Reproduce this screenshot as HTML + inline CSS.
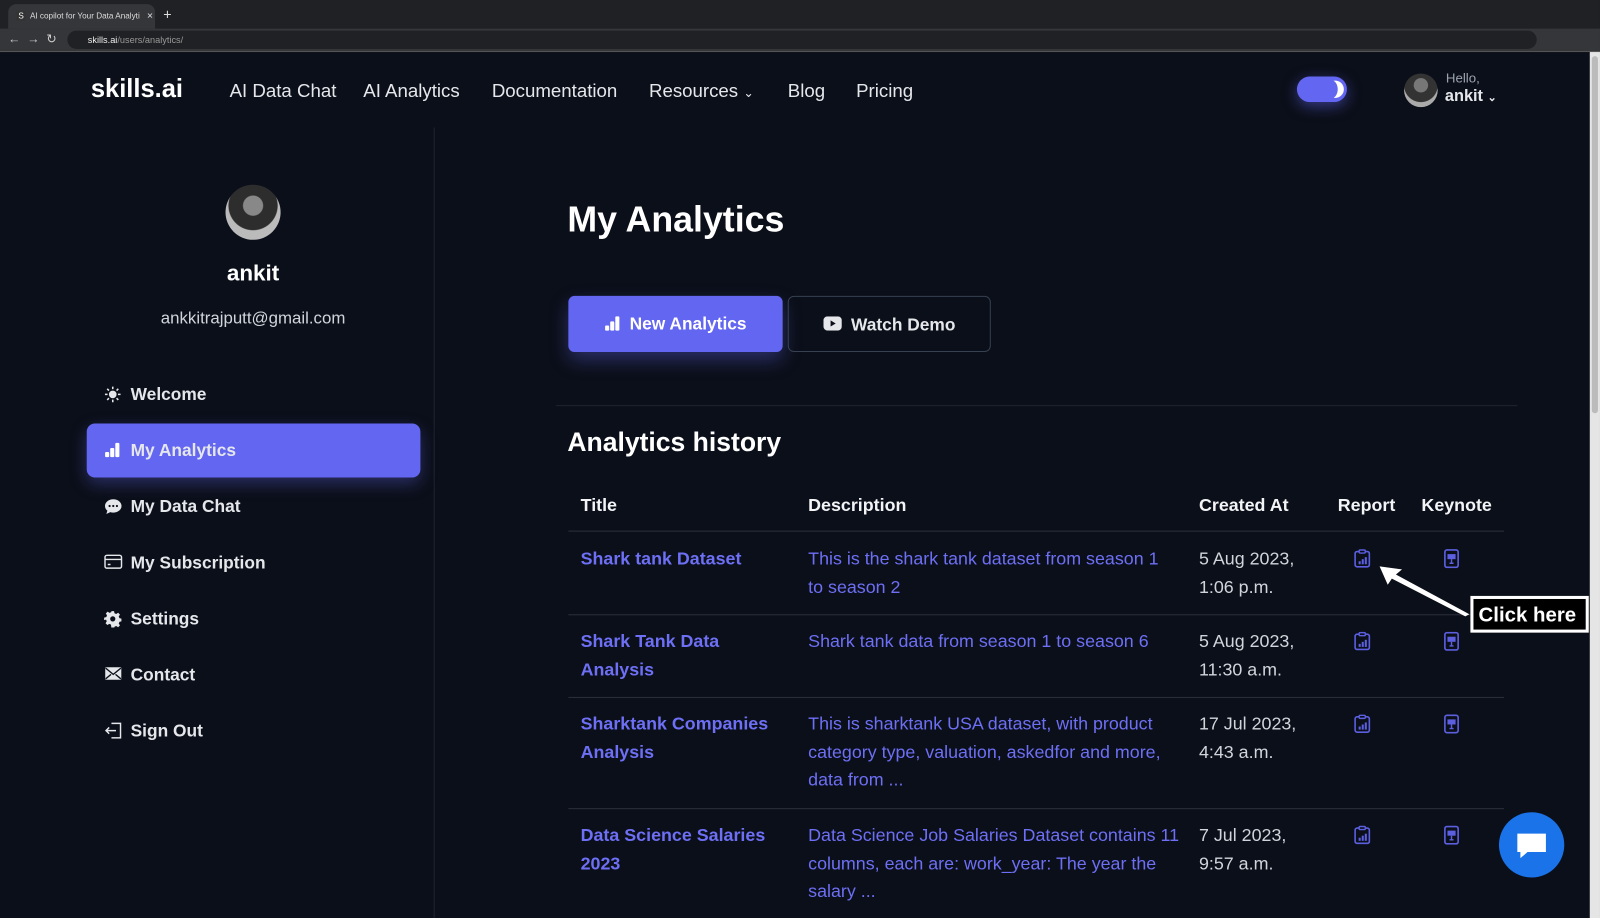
<!DOCTYPE html>
<html><head><meta charset="utf-8"><style>
*{box-sizing:border-box;margin:0;padding:0}
body{width:1600px;height:900px;overflow:hidden;background:#0b0f19;font-family:"Liberation Sans",sans-serif;color:#e5e7eb;position:relative}
#w{position:absolute;left:0;top:0;width:1568px;height:882px;transform:scale(1.0204);transform-origin:0 0}
.abs{position:absolute}
.tabbar{left:0;top:0;width:1568px;height:28px;background:#202124}
.tab{left:8px;top:4px;width:144px;height:24px;background:#35363a;border-radius:8px 8px 0 0;font-size:8px;color:#ddd;padding:7px 0 0 8px}
.toolbar{left:0;top:28px;width:1568px;height:23px;background:#35363a;border-bottom:1px solid #555}
.url{left:66px;top:30px;width:1440px;height:18px;background:#202124;border-radius:9px;font-size:9px;color:#999;padding:4px 0 0 20px}
.url b{color:#eee;font-weight:normal}
.nav{top:78px;font-size:18.3px;color:#e5e7eb}
.side a{position:absolute;left:85px;width:327px;height:53px;font-size:17px;color:#e5e7eb;font-weight:bold;padding:17px 0 0 43px}
.side svg{position:absolute;left:17px;top:18px}
.th{top:485px;font-size:17.5px;font-weight:bold;color:#f3f4f6}
.t{font-size:17.5px;line-height:27.5px;position:absolute}
.ti{color:#6d6ff5;font-weight:bold}
.de{color:#6d6ff5}
.ca{color:#d1d5db}
.hr{position:absolute;left:557px;width:917px;height:1px;background:#2a2f3a}
</style></head><body><div id="w">
<div class="abs tabbar"></div>
<div class="abs tab"><span style="background:#333;color:#fff;padding:0 2px;margin-right:4px">S</span>AI copilot for Your Data Analyti &nbsp;&nbsp;✕</div>
<div class="abs" style="left:160px;top:6px;color:#ddd;font-size:14px">+</div>
<div class="abs toolbar"></div>
<div class="abs" style="left:8px;top:31px;color:#ccc;font-size:12px">←&nbsp;&nbsp;→&nbsp;&nbsp;↻</div>
<div class="abs url"><b>skills.ai</b>/users/analytics/</div>
<div class="abs" style="left:1558px;top:51px;width:10px;height:849px;background:#e5e5e5"></div>
<div class="abs" style="left:1560px;top:55px;width:6px;height:350px;background:#bbb;border-radius:3px"></div>

<div class="abs" style="left:89px;top:73px;font-size:25px;font-weight:bold;color:#fff">skills.ai</div>
<div class="abs nav" style="left:225px">AI Data Chat</div>
<div class="abs nav" style="left:356px">AI Analytics</div>
<div class="abs nav" style="left:482px">Documentation</div>
<div class="abs nav" style="left:636px">Resources <span style="font-size:12px">&#8964;</span></div>
<div class="abs nav" style="left:772px">Blog</div>
<div class="abs nav" style="left:839px">Pricing</div>
<div class="abs" style="left:1271px;top:75px;width:49px;height:25px;background:#6366f1;border-radius:13px;box-shadow:0 4px 14px rgba(99,102,241,.5)"><div class="abs" style="left:29px;top:4px;width:17px;height:17px;border-radius:50%;background:#fff"></div><div class="abs" style="left:25px;top:3px;width:15px;height:19px;border-radius:50%;background:#6366f1"></div></div>
<div class="abs" style="left:1376px;top:72px;width:33px;height:33px;border-radius:50%;background:radial-gradient(circle at 50% 35%,#777 0 25%,#333 27% 60%,#aaa 62%)"></div>
<div class="abs" style="left:1417px;top:69px;font-size:13px;color:#9ca3af">Hello,</div>
<div class="abs" style="left:1416px;top:86px;font-size:16px;font-weight:bold;color:#e5e7eb">ankit <span style="font-size:11px">&#8964;</span></div>

<div class="abs" style="left:425px;top:125px;width:1px;height:775px;background:#1f2430"></div>
<div class="abs" style="left:221px;top:181px;width:54px;height:54px;border-radius:50%;background:radial-gradient(circle at 50% 38%,#888 0 22%,#2d2d2d 24% 55%,#bbb 57%)"></div>
<div class="abs" style="left:0;width:496px;top:255px;text-align:center;font-size:22px;font-weight:bold;color:#fff">ankit</div>
<div class="abs" style="left:0;width:496px;top:303px;text-align:center;font-size:16.5px;color:#d1d5db">ankkitrajputt@gmail.com</div>
<div class="side">
<a style="top:360px"><svg width="17" height="17" viewBox="0 0 20 20" fill="none" stroke="#e5e7eb" stroke-width="1.8"><circle cx="10" cy="10" r="3.5" fill="#e5e7eb"/><path d="M10 1v3M10 16v3M1 10h3M16 10h3M3.6 3.6l2 2M14.4 14.4l2 2M3.6 16.4l2-2M14.4 5.6l2-2"/></svg>Welcome</a>
<a style="top:415px;background:#6366f1;border-radius:8px;box-shadow:0 6px 16px rgba(99,102,241,.35)"><svg width="16" height="16" viewBox="0 0 16 16" fill="#fff"><rect x="1" y="10" width="4" height="5" rx="1"/><rect x="6" y="6" width="4" height="9" rx="1"/><rect x="11" y="1" width="4" height="14" rx="1"/></svg>My Analytics</a>
<a style="top:470px"><svg width="18" height="17" viewBox="0 0 20 18" fill="#e5e7eb"><path d="M10 1C5 1 1 4.3 1 8.3c0 2 1 3.8 2.6 5.1L2.5 17l4.3-2c1 .3 2.1.5 3.2.5 5 0 9-3.3 9-7.2S15 1 10 1z"/><circle cx="6" cy="8.3" r="1.2" fill="#0b0f19"/><circle cx="10" cy="8.3" r="1.2" fill="#0b0f19"/><circle cx="14" cy="8.3" r="1.2" fill="#0b0f19"/></svg>My Data Chat</a>
<a style="top:525px"><svg width="18" height="15" viewBox="0 0 20 16" fill="none" stroke="#e5e7eb" stroke-width="1.6"><rect x="1" y="1" width="18" height="14" rx="2"/><path d="M1 5.5h18M4 11h3"/></svg>My Subscription</a>
<a style="top:580px"><svg width="17" height="17" viewBox="0 0 20 20"><path fill="#e5e7eb" d="M8.5 1h3l.5 2.5 2 .9 2.2-1.4 2.1 2.1-1.4 2.2.9 2 2.5.5v3l-2.5.5-.9 2 1.4 2.2-2.1 2.1-2.2-1.4-2 .9-.5 2.5h-3L8 16.6l-2-.9-2.2 1.4-2.1-2.1 1.4-2.2-.9-2L0 11.5v-3l2.5-.5.9-2L2 3.8l2.1-2.1L6.3 3.1l2-.9z"/><circle cx="10" cy="10" r="3" fill="#0b0f19"/></svg>Settings</a>
<a style="top:635px"><svg width="18" height="14" viewBox="0 0 20 16" fill="#e5e7eb"><rect x="1" y="1" width="18" height="14" rx="1"/><path d="M1.5 2l8.5 7 8.5-7M1.5 14l6-5M18.5 14l-6-5" stroke="#0b0f19" stroke-width="1.5" fill="none"/></svg>Contact</a>
<a style="top:690px"><svg width="18" height="16" viewBox="0 0 20 18" fill="none" stroke="#e5e7eb" stroke-width="1.6"><path d="M8 1h10v16H8M13 9H2M5.5 5.5L2 9l3.5 3.5"/></svg>Sign Out</a>
</div>

<div class="abs" style="left:556px;top:196px;font-size:35px;font-weight:bold;color:#fff">My Analytics</div>
<div class="abs" style="left:557px;top:290px;width:210px;height:55px;background:#6366f1;border-radius:6px;box-shadow:0 8px 18px rgba(99,102,241,.35);font-size:17px;font-weight:bold;color:#fff;padding:18px 0 0 60px"><svg class="abs" style="left:35px;top:19px" width="16" height="16" viewBox="0 0 16 16" fill="#fff"><rect x="1" y="10" width="4" height="5" rx="1"/><rect x="6" y="6" width="4" height="9" rx="1"/><rect x="11" y="1" width="4" height="14" rx="1"/></svg>New Analytics</div>
<div class="abs" style="left:772px;top:290px;width:199px;height:55px;border:1px solid #374151;border-radius:6px;font-size:17px;font-weight:bold;color:#e5e7eb;padding:18px 0 0 61px"><svg class="abs" style="left:34px;top:19px" width="18" height="14" viewBox="0 0 18 14"><rect width="18" height="14" rx="4" fill="#e5e7eb"/><path d="M7 4l5 3-5 3z" fill="#0b0f19"/></svg>Watch Demo</div>
<div class="abs" style="left:545px;top:397px;width:942px;height:1px;background:#1f2430"></div>
<div class="abs" style="left:556px;top:418px;font-size:26px;font-weight:bold;color:#fff">Analytics history</div>
<div class="abs th" style="left:569px">Title</div>
<div class="abs th" style="left:792px">Description</div>
<div class="abs th" style="left:1175px">Created At</div>
<div class="abs th" style="left:1311px">Report</div>
<div class="abs th" style="left:1393px">Keynote</div>
<div class="hr" style="top:520px"></div>
<div class="hr" style="top:602px"></div>
<div class="hr" style="top:683px"></div>
<div class="hr" style="top:792px"></div>

<div class="t ti" style="left:569px;top:534px;width:200px">Shark tank Dataset</div>
<div class="t de" style="left:792px;top:534px;width:356px">This is the shark tank dataset from season 1 to season 2</div>
<div class="t ca" style="left:1175px;top:534px">5 Aug 2023,<br>1:06 p.m.</div>
<div class="t ti" style="left:569px;top:615px;width:200px">Shark Tank Data Analysis</div>
<div class="t de" style="left:792px;top:615px;width:360px">Shark tank data from season 1 to season 6</div>
<div class="t ca" style="left:1175px;top:615px">5 Aug 2023,<br>11:30 a.m.</div>
<div class="t ti" style="left:569px;top:696px;width:200px">Sharktank Companies Analysis</div>
<div class="t de" style="left:792px;top:696px;width:360px">This is sharktank USA dataset, with product category type, valuation, askedfor and more, data from ...</div>
<div class="t ca" style="left:1175px;top:696px">17 Jul 2023,<br>4:43 a.m.</div>
<div class="t ti" style="left:569px;top:805px;width:200px">Data Science Salaries 2023</div>
<div class="t de" style="left:792px;top:805px;width:370px">Data Science Job Salaries Dataset contains 11 columns, each are: work_year: The year the salary ...</div>
<div class="t ca" style="left:1175px;top:805px">7 Jul 2023,<br>9:57 a.m.</div>

<svg width="0" height="0" style="position:absolute"><defs>
<g id="rep"><rect x="1" y="2.5" width="14" height="15" rx="2" fill="none" stroke="#5b5fe0" stroke-width="1.6"/><rect x="5" y="1" width="6" height="3" rx="1" fill="#0b0f19" stroke="#5b5fe0" stroke-width="1.4"/><rect x="4.5" y="12" width="2" height="3" fill="#5b5fe0"/><rect x="7.5" y="10" width="2" height="5" fill="#5b5fe0"/><rect x="10.5" y="8" width="2" height="7" fill="#5b5fe0"/></g>
<g id="key"><rect x="1" y="1" width="13" height="17" rx="2" fill="none" stroke="#5b5fe0" stroke-width="1.6"/><rect x="3.5" y="5" width="8" height="5" fill="#5b5fe0"/><path d="M7.5 10v4M5.5 14h4" stroke="#5b5fe0" stroke-width="1.4"/></g>
</defs></svg>
<svg class="abs" style="left:1327px;top:538px" width="16" height="19"><use href="#rep"/></svg>
<svg class="abs" style="left:1415px;top:538px" width="15" height="19"><use href="#key"/></svg>
<svg class="abs" style="left:1327px;top:619px" width="16" height="19"><use href="#rep"/></svg>
<svg class="abs" style="left:1415px;top:619px" width="15" height="19"><use href="#key"/></svg>
<svg class="abs" style="left:1327px;top:700px" width="16" height="19"><use href="#rep"/></svg>
<svg class="abs" style="left:1415px;top:700px" width="15" height="19"><use href="#key"/></svg>
<svg class="abs" style="left:1327px;top:809px" width="16" height="19"><use href="#rep"/></svg>
<svg class="abs" style="left:1415px;top:809px" width="15" height="19"><use href="#key"/></svg>

<svg class="abs" style="left:1348px;top:550px" width="95" height="55"><path d="M4 5L26 8 20 13 92 52 88 54 16 17 12 23z" fill="#fff"/></svg>
<div class="abs" style="left:1441px;top:584px;width:116px;height:36px;background:#000;border:3px solid #fff;color:#fff;font-size:20px;font-weight:bold;padding:5px 0 0 5px">Click here</div>

<div class="abs" style="left:1469px;top:796px;width:64px;height:64px;border-radius:50%;background:#1a73e8"><svg class="abs" style="left:16px;top:19px" width="32" height="28" viewBox="0 0 32 28"><path d="M2 2h28v18H12l-7 6v-6H2z" fill="#fff"/></svg></div>
</div></body></html>
